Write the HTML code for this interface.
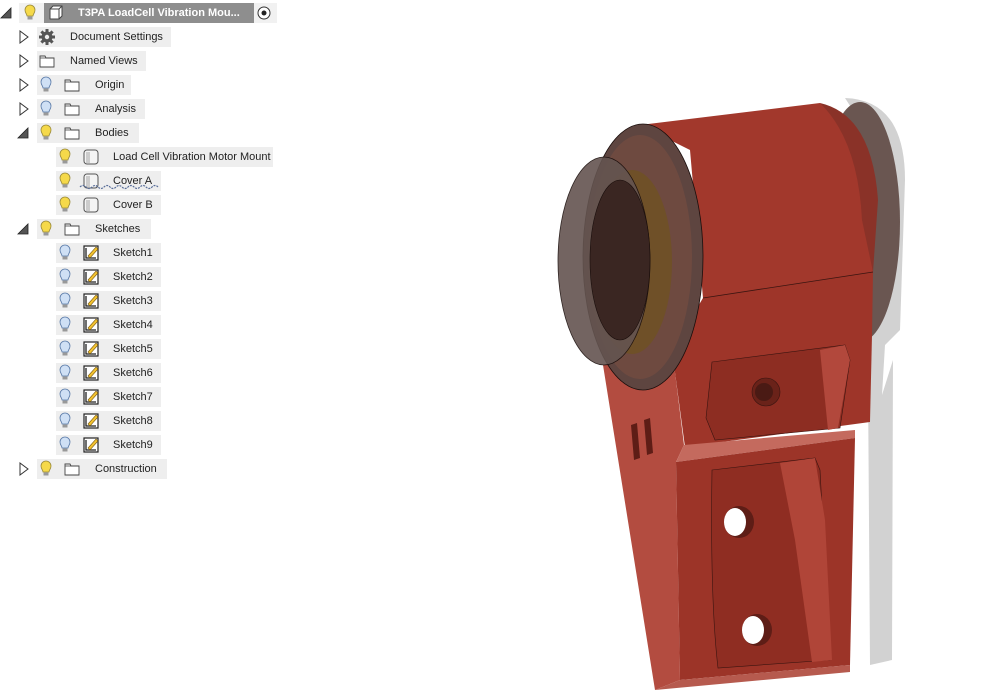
<!DOCTYPE html>
<html><head><meta charset="utf-8"><style>
body{margin:0;width:990px;height:690px;background:#fff;overflow:hidden;position:relative;font-family:"Liberation Sans",Arial,sans-serif;font-size:11px;color:#222}
.bg{position:absolute;height:20px;background:#eeeeee}
.t{position:absolute;line-height:20px;white-space:nowrap}
</style></head><body>
<svg width="0" height="0" style="position:absolute">
<defs>
<g id="bulbY"><path d="M-5,-2 a5,5 0 1 1 10,0 c0,3 -2,4 -2,6 h-6 c0,-2 -2,-3 -2,-6z" fill="#f5d94a" stroke="#9a8a3a" stroke-width="0.8"/><rect x="-2.5" y="4.5" width="5" height="3" fill="#999"/></g>
<g id="bulbB"><path d="M-5,-2 a5,5 0 1 1 10,0 c0,3 -2,4 -2,6 h-6 c0,-2 -2,-3 -2,-6z" fill="#cfe0f5" stroke="#5a7aa8" stroke-width="0.8"/><rect x="-2.5" y="4.5" width="5" height="3" fill="#999"/></g>
<g id="fold"><path d="M-7,-5 h5 l1,2 h8 v9 h-14z" fill="#fff" stroke="#444" stroke-width="0.9"/><path d="M-7,-3 h14" stroke="#444" stroke-width="0.8"/></g>
<g id="tri"><path d="M-4,-6 L4,0 L-4,6z" fill="#fff" stroke="#333" stroke-width="1"/></g>
<g id="triD"><path d="M5,-5 V5 H-5z" fill="#555" stroke="#222" stroke-width="0.8"/></g>
<g id="body"><rect x="-7" y="-7" width="14" height="14" rx="3" fill="#f4f4f4" stroke="#555"/><rect x="-5" y="-5" width="4" height="11" fill="#ccc"/></g>
<g id="sk"><rect x="-7" y="-7" width="14" height="14" fill="#fff" stroke="#222" stroke-width="1.2"/><path d="M-5,-5 V5 H5" stroke="#222" fill="none" stroke-width="1.3"/><path d="M-3,3 L5,-6 L7,-4 L-1,5z" fill="#f2c230" stroke="#7a5a10" stroke-width="0.6"/></g>
</defs>
</svg>

<div class="bg" style="left:19px;top:3px;width:258px;background:#f1f1f1"></div>
<div class="bg" style="left:44px;top:3px;width:210px;background:#8e8e8e"></div>
<div class="t" style="left:78px;top:3px;color:#fff;font-weight:bold">T3PA LoadCell Vibration Mou...</div>

<div class="bg" style="left:37px;top:27px;width:134px"></div><div class="t" style="left:70px;top:27px">Document Settings</div>
<div class="bg" style="left:37px;top:51px;width:109px"></div><div class="t" style="left:70px;top:51px">Named Views</div>
<div class="bg" style="left:37px;top:75px;width:94px"></div><div class="t" style="left:95px;top:75px">Origin</div>
<div class="bg" style="left:37px;top:99px;width:108px"></div><div class="t" style="left:95px;top:99px">Analysis</div>
<div class="bg" style="left:37px;top:123px;width:102px"></div><div class="t" style="left:95px;top:123px">Bodies</div>
<div class="bg" style="left:56px;top:147px;width:217px"></div><div class="t" style="left:113px;top:147px">Load Cell Vibration Motor Mount</div>
<div class="bg" style="left:56px;top:171px;width:105px"></div><div class="t" style="left:113px;top:171px">Cover A</div>
<div class="bg" style="left:56px;top:195px;width:105px"></div><div class="t" style="left:113px;top:195px">Cover B</div>
<div class="bg" style="left:37px;top:219px;width:114px"></div><div class="t" style="left:95px;top:219px">Sketches</div>
<div class="bg" style="left:56px;top:243px;width:105px"></div><div class="t" style="left:113px;top:243px">Sketch1</div>
<div class="bg" style="left:56px;top:267px;width:105px"></div><div class="t" style="left:113px;top:267px">Sketch2</div>
<div class="bg" style="left:56px;top:291px;width:105px"></div><div class="t" style="left:113px;top:291px">Sketch3</div>
<div class="bg" style="left:56px;top:315px;width:105px"></div><div class="t" style="left:113px;top:315px">Sketch4</div>
<div class="bg" style="left:56px;top:339px;width:105px"></div><div class="t" style="left:113px;top:339px">Sketch5</div>
<div class="bg" style="left:56px;top:363px;width:105px"></div><div class="t" style="left:113px;top:363px">Sketch6</div>
<div class="bg" style="left:56px;top:387px;width:105px"></div><div class="t" style="left:113px;top:387px">Sketch7</div>
<div class="bg" style="left:56px;top:411px;width:105px"></div><div class="t" style="left:113px;top:411px">Sketch8</div>
<div class="bg" style="left:56px;top:435px;width:105px"></div><div class="t" style="left:113px;top:435px">Sketch9</div>
<div class="bg" style="left:37px;top:459px;width:130px"></div><div class="t" style="left:95px;top:459px">Construction</div>

<svg width="990" height="690" style="position:absolute;left:0;top:0">
<g transform="translate(6,13)"><path d="M5,-5 V5 H-5z" fill="#555" stroke="#222" stroke-width="0.8"/></g>
<use href="#bulbY" x="30" y="12"/>
<g transform="translate(56,13)"><path d="M-6,-4 l3,-3 h9 v10 l-3,3 h-9z" fill="#fff" stroke="#444"/><path d="M-6,-4 h9 v10 M3,-4 l3,-3" stroke="#444" fill="none"/></g>
<circle cx="264" cy="13" r="6" fill="#fff" stroke="#333"/><circle cx="264" cy="13" r="2.5" fill="#222"/>
<use href="#tri" x="24" y="37"/>
<g transform="translate(47,37)" fill="#555"><circle r="5.5"/><g stroke="#555" stroke-width="3"><path d="M0,-8V8M-8,0H8M-5.6,-5.6L5.6,5.6M5.6,-5.6L-5.6,5.6"/></g><circle r="2.2" fill="#eee"/></g>
<use href="#tri" x="24" y="61"/><use href="#fold" x="47" y="61"/>
<use href="#tri" x="24" y="85"/><use href="#bulbB" x="46" y="84"/><use href="#fold" x="72" y="85"/>
<use href="#tri" x="24" y="109"/><use href="#bulbB" x="46" y="108"/><use href="#fold" x="72" y="109"/>
<use href="#triD" x="23" y="133"/><use href="#bulbY" x="46" y="132"/><use href="#fold" x="72" y="133"/>
<use href="#bulbY" x="65" y="156"/><use href="#body" x="91" y="157"/>
<use href="#bulbY" x="65" y="180"/><use href="#body" x="91" y="181"/>
<path d="M80,187 q3,-3 6,0 t6,0 t6,0 t6,0 t6,0 t6,0 t6,0 t6,0 t6,0 t6,0 t6,0 t6,0 t6,0" stroke="#5a6f9a" fill="none" stroke-width="1.2" stroke-dasharray="2,1"/>
<use href="#bulbY" x="65" y="204"/><use href="#body" x="91" y="205"/>
<use href="#triD" x="23" y="229"/><use href="#bulbY" x="46" y="228"/><use href="#fold" x="72" y="229"/>
<use href="#bulbB" x="65" y="252"/><use href="#sk" x="91" y="253"/>
<use href="#bulbB" x="65" y="276"/><use href="#sk" x="91" y="277"/>
<use href="#bulbB" x="65" y="300"/><use href="#sk" x="91" y="301"/>
<use href="#bulbB" x="65" y="324"/><use href="#sk" x="91" y="325"/>
<use href="#bulbB" x="65" y="348"/><use href="#sk" x="91" y="349"/>
<use href="#bulbB" x="65" y="372"/><use href="#sk" x="91" y="373"/>
<use href="#bulbB" x="65" y="396"/><use href="#sk" x="91" y="397"/>
<use href="#bulbB" x="65" y="420"/><use href="#sk" x="91" y="421"/>
<use href="#bulbB" x="65" y="444"/><use href="#sk" x="91" y="445"/>
<use href="#tri" x="24" y="469"/><use href="#bulbY" x="46" y="468"/><use href="#fold" x="72" y="469"/>

<!-- shadow -->
<path d="M845,98 Q905,100 905,180 L900,330 L885,345 L882,395 L893,360 L892,660 L870,665 L868,380 L872,140z" fill="#d2d2d2"/>
<!-- right end cap -->
<ellipse cx="860" cy="222" rx="40" ry="120" fill="#6a5651"/>
<!-- cylinder body -->
<path d="M640,125 L820,103 Q865,130 870,200 L873,272 L703,298 L690,150z" fill="#a2382c"/>
<path d="M820,103 Q858,140 862,220 L873,272 L878,200 Q872,115 820,103z" fill="#8a3228"/>
<!-- lower body left face -->
<path d="M603,365 L672,348 L684,445 L676,462 L680,680 L655,690z" fill="#b34c40"/>
<!-- upper front face -->
<path d="M703,298 L873,272 L872,335 L870,422 L685,447 L672,350z" fill="#9e3529"/>
<path d="M703,298 L873,272" stroke="#3a1410" stroke-width="0.8"/>
<path d="M676,462 L855,438 L855,430 L684,445z" fill="#c46a5e"/>
<!-- lower front -->
<path d="M676,462 L855,438 L850,665 L680,680z" fill="#9c3428"/>
<path d="M680,680 L850,665 L850,672 L655,690z" fill="#b65a4e"/>
<!-- top recess -->
<path d="M712,362 L845,345 L850,360 L840,428 L715,440 L706,418z" fill="#8d2d22" stroke="#3a1410" stroke-width="0.6"/>
<path d="M820,350 L845,345 L850,360 L838,428 L828,430z" fill="#b2483c"/>
<circle cx="766" cy="392" r="14" fill="#6a2219" stroke="#3a1410" stroke-width="0.6"/>
<circle cx="764" cy="392" r="9" fill="#4a1a14"/>
<!-- lower recess -->
<path d="M712,470 L815,458 L820,470 L830,660 L718,668 Q710,600 712,470z" fill="#8f2d22" stroke="#3a1410" stroke-width="0.6"/>
<path d="M780,463 L815,458 L825,520 L832,660 L812,662 L795,540z" fill="#b04538"/>
<ellipse cx="739" cy="522" rx="15" ry="16" fill="#5e1d16"/><ellipse cx="735" cy="522" rx="11" ry="14" fill="#fff"/>
<ellipse cx="757" cy="630" rx="15" ry="16" fill="#5e1d16"/><ellipse cx="753" cy="630" rx="11" ry="14" fill="#fff"/>
<path d="M631,425 l6,-2 l3,35 l-6,2z" fill="#5e1d16"/><path d="M644,420 l6,-2 l3,35 l-6,2z" fill="#5e1d16"/>
<!-- left disc -->
<ellipse cx="643" cy="257" rx="60" ry="133" fill="#5e4540" stroke="#1a0e0c" stroke-width="0.8"/>
<ellipse cx="640" cy="257" rx="52" ry="122" fill="#6e4a40"/>
<ellipse cx="632" cy="262" rx="40" ry="92" fill="#6f5028"/>
<ellipse cx="604" cy="261" rx="46" ry="104" fill="#645450" stroke="#1a0e0c" stroke-width="0.8" opacity="0.9"/>
<ellipse cx="620" cy="260" rx="30" ry="80" fill="#3a2622" stroke="#1a0e0c" stroke-width="0.6"/>
</svg>
</body></html>
